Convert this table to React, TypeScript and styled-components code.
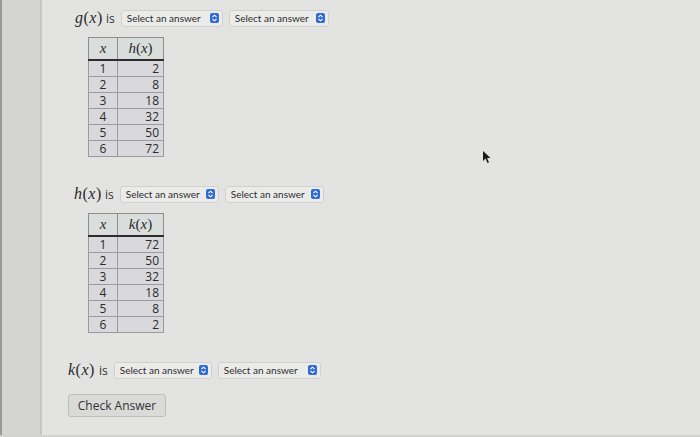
import React from "react";
import styled, { createGlobalStyle } from "styled-components";

const Global = createGlobalStyle`
  html, body { margin: 0; padding: 0; }
  body {
    width: 700px; height: 437px; overflow: hidden;
    background: #e2e2e0;
    font-family: Lato, "Open Sans", "Liberation Sans", sans-serif;
  }
`;

const Page = styled.div`
  position: relative;
  display: flex;
  width: 700px;
  height: 437px;
  background: #e3e3e1;
  border-bottom: 2px solid #d2d2d0;
  box-sizing: border-box;
`;

const SideStrip = styled.div`
  width: 42px;
  flex: none;
  background: #d4d4d3;
  border-left: 2px solid #9a9a9a;
  border-right: 2px solid #c6c6c4;
  box-sizing: border-box;
`;

const Content = styled.div`
  flex: 1;
  display: flex;
  flex-direction: column;
  align-items: flex-start;
  padding: 9px 0 0 30px;
`;

const Section = styled.div<{ $gap: number }>`
  display: flex;
  flex-direction: column;
  align-items: flex-start;
  margin-bottom: ${(p) => p.$gap}px;
`;

const Row = styled.div`
  display: flex;
  align-items: center;
  height: 18px;
`;

const MathLabel = styled.span`
  font-family: "Liberation Serif", "DejaVu Serif", serif;
  font-size: 16px;
  color: #2a2a2a;
  width: 27px;
  letter-spacing: 0.5px;
`;

const Upright = styled.span`
  font-style: normal;
`;
const Ital = styled.span`
  font-style: italic;
`;

const Is = styled.span`
  font-family: "Open Sans", "Liberation Sans", sans-serif;
  font-size: 12px;
  color: #333;
  margin: 0 6px 0 4px;
`;

const Select = styled.div<{ $w: number }>`
  display: flex;
  align-items: center;
  justify-content: space-between;
  box-sizing: border-box;
  width: ${(p) => p.$w}px;
  height: 17px;
  padding: 0 3px 0 5px;
  margin-right: 6px;
  background: #ebebea;
  border: 1px solid #d0d0ce;
  border-radius: 3px;
  font-size: 10px;
  color: #2c2c2c;
`;

const Stepper = styled.span`
  display: inline-flex;
  align-items: center;
  justify-content: center;
  width: 9px;
  height: 10px;
  border-radius: 2px;
  background: #2f6bd6;
`;

const Table = styled.table`
  margin: 10px 0 0 16px;
  border-collapse: collapse;
  border: 1px solid #3a3a3a;
  font-family: "Open Sans", "Liberation Sans", sans-serif;
  font-size: 12px;
  color: #2a2a2a;
`;

const Th = styled.th<{ $w: number }>`
  width: ${(p) => p.$w}px;
  height: 21px;
  padding: 0;
  background: #d9dedd;
  border: 1px solid #8d8d8d;
  border-bottom: 2px solid #2c2c2c;
  font-family: "Liberation Serif", serif;
  font-weight: normal;
  font-size: 15px;
`;

const Td = styled.td<{ $align: string }>`
  height: 15px;
  padding: 0 4px 0 4px;
  line-height: 15px;
  background: #d8d8dd;
  border: 1px solid #9a9aa0;
  text-align: ${(p) => p.$align};
`;

const CheckButton = styled.button`
  margin: 0 0 0 -4px;
  width: 98px;
  height: 23px;
  background: #dadad9;
  border: 1px solid #bdbdbb;
  border-radius: 3px;
  font-family: "Open Sans", "Liberation Sans", sans-serif;
  font-size: 12px;
  color: #333;
  padding: 0;
`;

const Cursor = styled.svg`
  position: absolute;
  left: 482px;
  top: 150px;
`;

const StepIcon = () => (
  <Stepper>
    <svg width="7" height="8" viewBox="0 0 7 8">
      <path d="M1.5 3 L3.5 1.2 L5.5 3" stroke="#fff" strokeWidth="1.1" fill="none" />
      <path d="M1.5 5 L3.5 6.8 L5.5 5" stroke="#fff" strokeWidth="1.1" fill="none" />
    </svg>
  </Stepper>
);

const Fn = ({ f }: { f: string }) => (
  <>
    <Ital>{f}</Ital>
    <Upright>(</Upright>
    <Ital>x</Ital>
    <Upright>)</Upright>
  </>
);

type Sec = { name: string; next?: string; values?: number[]; offset: number; w1: number; w2: number; gap: number };

const sections: Sec[] = [
  { name: "g", next: "h", values: [2, 8, 18, 32, 50, 72], offset: 3, w1: 102, w2: 100, gap: 28 },
  { name: "h", next: "k", values: [72, 50, 32, 18, 8, 2], offset: 2, w1: 99, w2: 99, gap: 28 },
  { name: "k", offset: -4, w1: 98, w2: 103, gap: 15 },
];

export default function App() {
  return (
    <>
      <Global />
      <Page>
        <SideStrip />
        <Content>
          {sections.map((s) => (
            <Section key={s.name} $gap={s.gap}>
              <Row style={{ marginLeft: s.offset }}>
                <MathLabel>
                  <Fn f={s.name} />
                </MathLabel>
                <Is>is</Is>
                <Select $w={s.w1}>
                  Select an answer <StepIcon />
                </Select>
                <Select $w={s.w2}>
                  Select an answer <StepIcon />
                </Select>
              </Row>
              {s.values && s.next && (
                <Table>
                  <thead>
                    <tr>
                      <Th $w={28}>
                        <Ital>x</Ital>
                      </Th>
                      <Th $w={45}>
                        <Fn f={s.next} />
                      </Th>
                    </tr>
                  </thead>
                  <tbody>
                    {s.values.map((v, i) => (
                      <tr key={i}>
                        <Td $align="center">{i + 1}</Td>
                        <Td $align="right">{v}</Td>
                      </tr>
                    ))}
                  </tbody>
                </Table>
              )}
            </Section>
          ))}
          <CheckButton>Check Answer</CheckButton>
        </Content>
        <Cursor width="10" height="14" viewBox="0 0 10 14">
          <path d="M1 1 L1 11 L3.5 8.5 L5.5 13 L7 12.3 L5 8 L8.5 8 Z" fill="#1a1a1a" />
        </Cursor>
      </Page>
    </>
  );
}
